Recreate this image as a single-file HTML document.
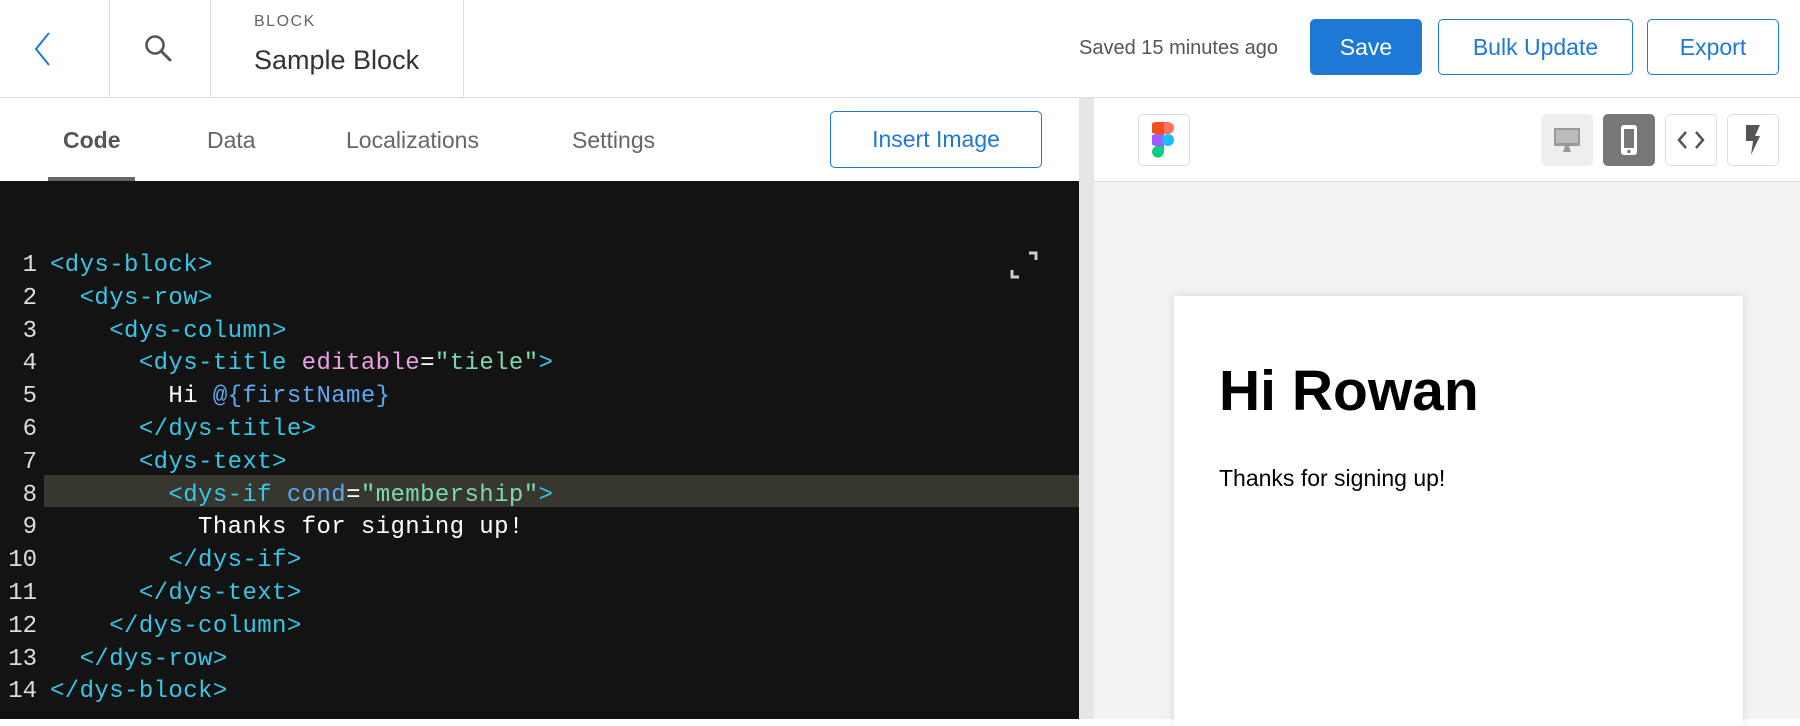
<!DOCTYPE html>
<html><head><meta charset="utf-8"><style>
*{box-sizing:border-box;margin:0;padding:0}
body{width:1800px;height:719px;overflow:hidden;background:#fff;font-family:"Liberation Sans",sans-serif;position:relative}
.a{position:absolute}
.btn{position:absolute;border:1.5px solid #1e78d6;border-radius:5px;color:#1e78d6;font-size:23px;display:flex;align-items:center;justify-content:center;background:#fff}
.tb{position:absolute;top:114px;width:52px;height:52px;border:1.5px solid #ddd;border-radius:5px;display:flex;align-items:center;justify-content:center;background:#fff}
.code{position:absolute;left:0;top:250px;font-family:"Liberation Mono",monospace;font-size:24px;letter-spacing:0.4px;line-height:32.8px;color:#fff;white-space:pre}
.ln{display:inline-block;width:37px;text-align:right;color:#ddd;margin-right:13px;letter-spacing:0}
.t{color:#38c6e6}.p{color:#e9a0e6}.b{color:#5ea8f0}.s{color:#7dd8b0}
</style></head><body>
<div class="a" style="left:0;top:0;width:1800px;height:98px;border-bottom:1.5px solid #ddd"></div>
<div class="a" style="left:109px;top:0;width:1px;height:97px;background:#ddd"></div>
<div class="a" style="left:210px;top:0;width:1px;height:97px;background:#ddd"></div>
<div class="a" style="left:463px;top:0;width:1px;height:97px;background:#ddd"></div>
<svg class="a" style="left:32px;top:31px" width="20" height="36"><path d="M17 2 L4 18 L17 34" stroke="#1e78d6" stroke-width="2" fill="none"/></svg>
<svg class="a" style="left:143px;top:33px" width="32" height="32"><circle cx="12" cy="12" r="8.5" stroke="#555" stroke-width="2.6" fill="none"/><path d="M18 18 L27 27" stroke="#555" stroke-width="3" stroke-linecap="round"/></svg>
<div class="a" style="left:254px;top:13px;font-size:16px;letter-spacing:1.5px;color:#666">BLOCK</div>
<div class="a" style="left:254px;top:45px;font-size:27px;color:#333">Sample Block</div>
<div class="a" style="left:1079px;top:37px;font-size:20px;color:#555">Saved 15 minutes ago</div>
<div class="btn" style="left:1310px;top:19px;width:112px;height:56px;background:#1e78d6;color:#fff">Save</div>
<div class="btn" style="left:1438px;top:19px;width:195px;height:56px">Bulk Update</div>
<div class="btn" style="left:1647px;top:19px;width:132px;height:56px">Export</div>
<div class="a" style="left:63px;top:127px;font-size:23px;color:#555;font-weight:bold">Code</div>
<div class="a" style="left:207px;top:127px;font-size:23px;color:#666">Data</div>
<div class="a" style="left:346px;top:127px;font-size:23px;color:#666">Localizations</div>
<div class="a" style="left:572px;top:127px;font-size:23px;color:#666">Settings</div>
<div class="a" style="left:48px;top:177px;width:87px;height:4px;background:#666"></div>
<div class="btn" style="left:830px;top:111px;width:212px;height:57px">Insert Image</div>
<div class="a" style="left:1079px;top:98px;width:15px;height:621px;background:#e6e6e6"></div>
<div class="a" style="left:0;top:181px;width:1079px;height:538px;background:#131313"></div>
<div class="a" style="left:44px;top:475px;width:1035px;height:32px;background:#37372f"></div>
<svg class="a" style="left:1010px;top:251px" width="28" height="28"><path d="M19 2 H26 V9" stroke="#ccc" stroke-width="3" fill="none"/><path d="M2 19 V26 H9" stroke="#ccc" stroke-width="3" fill="none"/></svg>
<div class="code"><span class="ln">1</span><span class="t">&lt;dys-block&gt;</span>
<span class="ln">2</span>  <span class="t">&lt;dys-row&gt;</span>
<span class="ln">3</span>    <span class="t">&lt;dys-column&gt;</span>
<span class="ln">4</span>      <span class="t">&lt;dys-title</span> <span class="p">editable</span>=<span class="s">"tiele"</span><span class="t">&gt;</span>
<span class="ln">5</span>        Hi <span class="b">@{firstName}</span>
<span class="ln">6</span>      <span class="t">&lt;/dys-title&gt;</span>
<span class="ln">7</span>      <span class="t">&lt;dys-text&gt;</span>
<span class="ln">8</span>        <span class="t">&lt;dys-if</span> <span class="b">cond</span>=<span class="s">"membership"</span><span class="t">&gt;</span>
<span class="ln">9</span>          Thanks for signing up!
<span class="ln">10</span>        <span class="t">&lt;/dys-if&gt;</span>
<span class="ln">11</span>      <span class="t">&lt;/dys-text&gt;</span>
<span class="ln">12</span>    <span class="t">&lt;/dys-column&gt;</span>
<span class="ln">13</span>  <span class="t">&lt;/dys-row&gt;</span>
<span class="ln">14</span><span class="t">&lt;/dys-block&gt;</span></div>
<div class="a" style="left:1094px;top:181px;width:706px;height:538px;background:#f2f2f2;border-top:1.5px solid #ddd"></div>
<div class="tb" style="left:1138px">
<svg width="24" height="36" viewBox="0 0 24 36"><path d="M4 0h8v12H4a6 6 0 0 1 0-12z" fill="#f24e1e"/><path d="M12 0h4a6 6 0 0 1 0 12h-4z" fill="#ff7262"/><path d="M4 12h8v12H4a6 6 0 0 1 0-12z" fill="#a259ff"/><circle cx="16" cy="18" r="6" fill="#1abcfe"/><path d="M4 24h8v6a6 6 0 1 1-8-6z" fill="#0acf83"/></svg></div>
<div class="tb" style="left:1541px;background:#eee;border-color:#eee">
<svg width="30" height="28"><rect x="2" y="2" width="26" height="18" fill="#999"/><rect x="4" y="4" width="22" height="13" fill="#bbb"/><path d="M11 26 L13 20 H17 L19 26Z" fill="#999"/></svg></div>
<div class="tb" style="left:1603px;background:#777;border-color:#777">
<svg width="18" height="32"><rect x="1" y="1" width="16" height="30" rx="3" fill="#fff"/><rect x="4" y="5" width="10" height="19" fill="#777"/><circle cx="9" cy="27.5" r="1.8" fill="#777"/></svg></div>
<div class="tb" style="left:1665px"><svg width="30" height="20"><path d="M10 2 L3 10 L10 18 M20 2 L27 10 L20 18" stroke="#555" stroke-width="2.5" fill="none"/></svg></div>
<div class="tb" style="left:1727px"><svg width="20" height="32"><path d="M3 1 H17 L12 12 H17 L8 31 L10 17 H3Z" fill="#555"/></svg></div>
<div class="a" style="left:1174px;top:296px;width:569px;height:430px;background:#fff;box-shadow:0 0 8px rgba(0,0,0,0.12)"></div>
<div class="a" style="left:1219px;top:358px;font-size:57px;font-weight:bold;color:#000;line-height:66px">Hi Rowan</div>
<div class="a" style="left:1219px;top:465px;font-size:23px;color:#000">Thanks for signing up!</div>
</body></html>
